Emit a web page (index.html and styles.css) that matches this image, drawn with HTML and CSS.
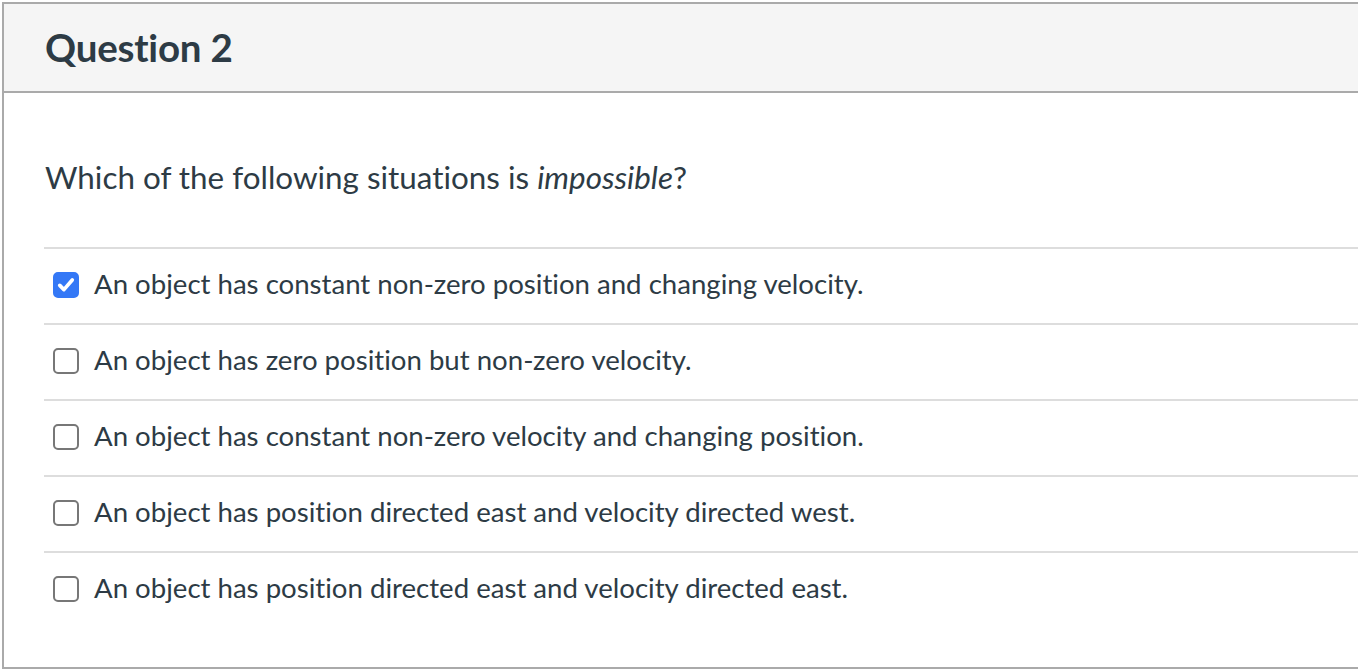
FILE: index.html
```html
<!DOCTYPE html>
<html lang="en">
<head>
<meta charset="utf-8">
<title>Question 2</title>
<link rel="stylesheet" href="styles.css">
</head>
<body>
<div class="card">
  <div class="header"><h2 class="title">Question 2</h2></div>
  <div class="content">
    <p class="prompt">Which of the following situations is <em>impossible</em>?</p>
    <div class="answers">
      <label class="answer"><span class="box checked"><svg viewBox="0 0 24 24" width="20" height="20"><path d="M4.5 12.5 L9.5 17.5 L19.5 6" fill="none" stroke="#fff" stroke-width="4.4" stroke-linecap="round" stroke-linejoin="round"/></svg></span><span class="text">An object has constant non-zero position and changing velocity.</span></label>
      <label class="answer"><span class="box"></span><span class="text">An object has zero position but non-zero velocity.</span></label>
      <label class="answer"><span class="box"></span><span class="text">An object has constant non-zero velocity and changing position.</span></label>
      <label class="answer"><span class="box"></span><span class="text">An object has position directed east and velocity directed west.</span></label>
      <label class="answer"><span class="box"></span><span class="text">An object has position directed east and velocity directed east.</span></label>
    </div>
  </div>
</div>
</body>
</html>
```

FILE: styles.css
```css
html, body {
  margin: 0;
  padding: 0;
  background: #fff;
  overflow: hidden;
}
body {
  font-family: Lato, "Liberation Sans", sans-serif;
  color: #2d3b45;
  padding: 2px 0 0 2px;
  font-variant-ligatures: none;
}
.card {
  width: 1400px;
  height: 667px;
  border: 2px solid #aaaaaa;
  box-sizing: border-box;
  display: flex;
  flex-direction: column;
}
.header {
  background: #f5f5f5;
  height: 89px;
  border-bottom: 2px solid #aaaaaa;
  box-sizing: border-box;
  display: flex;
  align-items: center;
  padding-left: 41px;
}
.title {
  margin: 0;
  font-size: 38.5px;
  font-weight: 700;
  line-height: 1;
  letter-spacing: -0.2px;
}
.content {
  padding: 0 0 0 40px;
}
.prompt {
  margin: 0;
  padding: 62px 0 0 1px;
  height: 92px;
  font-size: 31.4px;
  line-height: 44px;
  box-sizing: content-box;
}
.prompt em {
  font-style: italic;
}
.answers {
  display: flex;
  flex-direction: column;
}
.answer {
  display: flex;
  align-items: center;
  height: 76px;
  border-top: 2px solid #dddddd;
  box-sizing: border-box;
  padding-left: 9px;
  padding-bottom: 4px;
  gap: 15px;
}
.box {
  width: 26px;
  height: 26px;
  box-sizing: border-box;
  border: 2px solid #777777;
  border-radius: 5px;
  display: flex;
  align-items: center;
  justify-content: center;
  flex: none;
  margin-top: 2px;
}
.box.checked {
  background: #3478f6;
  border-color: #3478f6;
}
.text {
  font-size: 27.6px;
  line-height: 32px;
}
```
